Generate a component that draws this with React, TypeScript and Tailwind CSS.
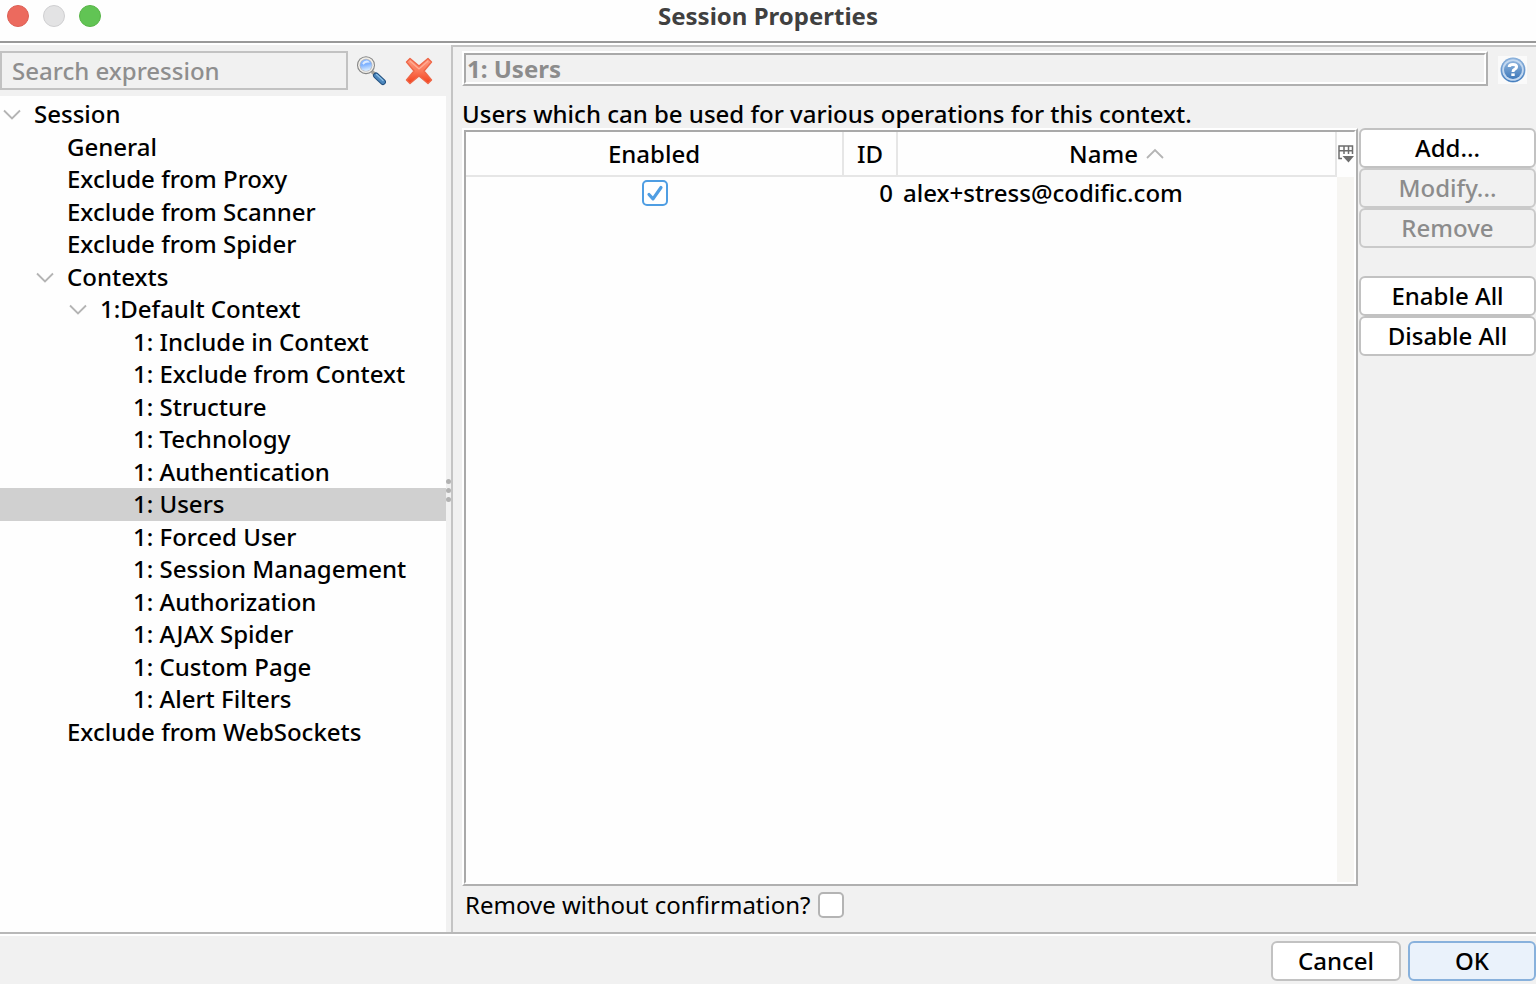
import { useState } from "react";
import type { ReactNode } from "react";

type Node = { label: string; indent: string; open?: boolean };

const nodes: Node[] = [
  { label: "Session", indent: "pl-[3px]", open: true },
  { label: "General", indent: "pl-[67px]" },
  { label: "Exclude from Proxy", indent: "pl-[67px]" },
  { label: "Exclude from Scanner", indent: "pl-[67px]" },
  { label: "Exclude from Spider", indent: "pl-[67px]" },
  { label: "Contexts", indent: "pl-9", open: true },
  { label: "1:Default Context", indent: "pl-[69px]", open: true },
  { label: "1: Include in Context", indent: "pl-[133px]" },
  { label: "1: Exclude from Context", indent: "pl-[133px]" },
  { label: "1: Structure", indent: "pl-[133px]" },
  { label: "1: Technology", indent: "pl-[133px]" },
  { label: "1: Authentication", indent: "pl-[133px]" },
  { label: "1: Users", indent: "pl-[133px]" },
  { label: "1: Forced User", indent: "pl-[133px]" },
  { label: "1: Session Management", indent: "pl-[133px]" },
  { label: "1: Authorization", indent: "pl-[133px]" },
  { label: "1: AJAX Spider", indent: "pl-[133px]" },
  { label: "1: Custom Page", indent: "pl-[133px]" },
  { label: "1: Alert Filters", indent: "pl-[133px]" },
  { label: "Exclude from WebSockets", indent: "pl-[67px]" },
];

function Chevron({ up = false }: { up?: boolean }) {
  return (
    <svg viewBox="0 0 18 12" className="h-3 w-[18px] shrink-0" fill="none" stroke="#b4b4b4" strokeWidth="1.8" aria-hidden="true">
      <path d={up ? "M1 10 L9 2 L17 10" : "M1 2.500 L9 10.500 L17 2.500"} />
    </svg>
  );
}

function SearchIcon() {
  return (
    <svg viewBox="0 0 30 30" className="size-[30px]" aria-hidden="true">
      <defs>
        <linearGradient id="lens" x1="0" y1="0" x2="0.2" y2="1">
          <stop offset="0" stopColor="#8fbcff" />
          <stop offset="0.5" stopColor="#7fb2ff" />
          <stop offset="1" stopColor="#d4e9ff" />
        </linearGradient>
      </defs>
      <path d="M16 15.500 L19.500 19" stroke="#a9a59c" strokeWidth="3.500" />
      <path d="M20 19.500 L27 26" stroke="#23507f" strokeWidth="6" strokeLinecap="round" />
      <path d="M20 19.500 L27 26" stroke="#4b86bd" strokeWidth="4" strokeLinecap="round" />
      <path d="M20.500 18.500 L27 24.500" stroke="#8fc0e6" strokeWidth="1.300" strokeLinecap="round" />
      <circle cx="10" cy="9.200" r="9" fill="#868686" />
      <circle cx="10" cy="9.200" r="7.900" fill="#f1efe9" />
      <circle cx="10" cy="9.200" r="6.400" fill="#b6b9c2" />
      <circle cx="10" cy="9.200" r="5.700" fill="url(#lens)" />
      <path d="M6.200 7.200 Q8 4.300 11 4.500 Q13 4.700 13.800 6.700 Q10 5.700 7.500 8.700 Z" fill="#dcebff" />
    </svg>
  );
}

function ClearIcon() {
  return (
    <svg viewBox="0 0 28 28" className="size-7" aria-hidden="true">
      <defs>
        <linearGradient id="cross" x1="0" y1="0" x2="0" y2="1">
          <stop offset="0" stopColor="#ff9a80" />
          <stop offset="0.5" stopColor="#fb7757" />
          <stop offset="1" stopColor="#f4401c" />
        </linearGradient>
      </defs>
      <path
        d="M5 1.500 L14 9 L23 1.500 L26.500 5 L19 14 L26.500 23 L23 26.500 L14 19 L5 26.500 L1.500 23 L9 14 L1.500 5 Z"
        fill="url(#cross)"
        stroke="#ee6647"
        strokeWidth="1.400"
        strokeLinejoin="round"
      />
      <path d="M5 4 L14 12 L23 4" fill="none" stroke="#ffad95" strokeWidth="1.200" />
    </svg>
  );
}

function HelpIcon() {
  return (
    <svg viewBox="0 0 26 26" className="size-[26px]" aria-hidden="true">
      <defs>
        <linearGradient id="help" x1="0" y1="0" x2="0" y2="1">
          <stop offset="0" stopColor="#8fb4dd" />
          <stop offset="1" stopColor="#3f79ba" />
        </linearGradient>
      </defs>
      <circle cx="13" cy="13" r="12.500" fill="#7fa9d8" />
      <circle cx="13" cy="13" r="12" fill="url(#help)" />
      <circle cx="13" cy="13" r="10.800" fill="#c3d8f0" />
      <circle cx="13" cy="13" r="9" fill="url(#help)" />
      <path d="M9.200 10 Q9.200 7.400 13 7.400 Q16.600 7.400 16.600 9.800 Q16.600 11.400 14.500 12.400 Q13 13 13 15" fill="none" stroke="#fff" strokeWidth="3" />
      <rect x="11.300" y="16.400" width="3.400" height="2.600" fill="#fff" />
    </svg>
  );
}

function ColumnsIcon() {
  return (
    <svg viewBox="0 0 17 20" className="h-5 w-[17px]" fill="none" stroke="#6e6e6e" aria-hidden="true">
      <path d="M5 14.500 H2 V2 H15.500 V10 M2 6.800 H15.500 M7 2 V10 M11.500 2 V10" strokeWidth="1.500" />
      <path d="M5.500 12 H17 L11.500 18.500 Z" fill="#6e6e6e" stroke="none" />
    </svg>
  );
}

function Etched({ className, children }: { className: string; children: ReactNode }) {
  return (
    <div className={`flex border-2 border-t-white border-r-[#b0b0b0] border-b-[#b0b0b0] border-l-white ${className}`}>
      <div className="flex min-w-0 flex-1 border-2 border-t-[#a9a9a9] border-r-white border-b-white border-l-[#a9a9a9]">{children}</div>
    </div>
  );
}

function CheckBox({ id, label, checked, onChange }: { id: string; label?: string; checked: boolean; onChange: () => void }) {
  return (
    <span className="inline-grid size-[26px] place-items-center">
      <input
        id={id}
        type="checkbox"
        aria-label={label}
        checked={checked}
        onChange={onChange}
        className="col-start-1 row-start-1 size-[26px] appearance-none rounded-[5px] border-2 border-[#b4b4b4] bg-white checked:border-[#4f9ee3]"
      />
      {checked && (
        <svg viewBox="0 0 26 26" className="pointer-events-none col-start-1 row-start-1 size-[26px]" fill="none" aria-hidden="true">
          <path d="M7 14.500 L11 18.800 L19 7.500" stroke="#4f9ee3" strokeWidth="3.200" strokeLinecap="round" strokeLinejoin="round" />
        </svg>
      )}
    </span>
  );
}

function SideButton({ children, disabled = false }: { children: ReactNode; disabled?: boolean }) {
  return (
    <button
      type="button"
      disabled={disabled}
      className="h-10 w-full rounded-md border-2 border-[#c2c2c2] bg-white text-center leading-8 disabled:border-[#cacaca] disabled:bg-[#f1f1f1] disabled:text-[#8c8c8c]"
    >
      {children}
    </button>
  );
}

export default function App() {
  const [selected, setSelected] = useState("1: Users");
  const [enabled, setEnabled] = useState(true);
  const [skipConfirm, setSkipConfirm] = useState(false);

  return (
    <div className="flex min-h-screen flex-col bg-[#f1f1f1] font-['Noto_Sans',sans-serif] text-2xl font-medium text-black">
      <header className="grid h-[43px] grid-cols-[1fr_auto_1fr] items-start border-b-2 border-[#999] bg-[#fefefe]">
        <div className="flex gap-3.5 pt-[5px] pl-[7px]">
          <button type="button" aria-label="Close" className="size-[22px] rounded-full border border-[#dd6056] bg-[#ec6a5e]" />
          <button type="button" aria-label="Minimize" className="size-[22px] rounded-full border border-[#cfcfd1] bg-[#e3e3e4]" />
          <button type="button" aria-label="Zoom" className="size-[22px] rounded-full border border-[#58b548] bg-[#61c454]" />
        </div>
        <h1 className="leading-8 font-bold text-[#404040]">Session Properties</h1>
      </header>

      <div className="flex flex-1 border-t-2 border-white">
        <aside className="flex w-[446px] shrink-0 flex-col">
          <div className="flex h-[51px] items-center">
            <input
              type="text"
              aria-label="Search expression"
              placeholder="Search expression"
              className="h-[39px] w-[348px] border-2 border-[#c2c2c2] bg-[#f1f1f1] px-2.5 outline-none placeholder:text-[#8e8e8e]"
            />
            <button type="button" aria-label="Search" className="ml-2">
              <SearchIcon />
            </button>
            <button type="button" aria-label="Clear search" className="ml-[19px]">
              <ClearIcon />
            </button>
          </div>
          <nav aria-label="Session tree" className="flex-1 bg-[#fefefe] pt-0.5">
            <ul className="grid h-[650px] auto-rows-fr">
              {nodes.map((n) => (
                <li key={n.label} className={selected === n.label ? "bg-[#d0d0d0]" : ""}>
                  <button
                    type="button"
                    onClick={() => setSelected(n.label)}
                    className={`flex h-full w-full items-center gap-[13px] text-left leading-8 whitespace-nowrap ${n.indent}`}
                  >
                    {n.open && <Chevron />}
                    {n.label}
                  </button>
                </li>
              ))}
            </ul>
          </nav>
        </aside>

        <div className="flex w-[5px] shrink-0 flex-col items-center justify-center gap-1 pt-1" role="separator" aria-orientation="vertical">
          <span className="size-[5px] rounded-full bg-[#b2b2b2]" />
          <span className="size-[5px] rounded-full bg-[#b2b2b2]" />
          <span className="size-[5px] rounded-full bg-[#b2b2b2]" />
        </div>

        <main className="flex min-w-0 flex-1 flex-col border-t-2 border-l-2 border-[#c4c4c4]">
          <div className="flex items-start gap-2.5 pt-1 pr-[9px] pl-[9px]">
            <Etched className="min-w-0 flex-1">
              <input
                type="text"
                readOnly
                aria-label="Panel"
                value="1: Users"
                className="h-[27px] w-full bg-[#f1f1f1] pl-px font-bold text-[#8c8c8c] outline-none"
              />
            </Etched>
            <button type="button" aria-label="Help" className="mt-[5px] flex h-7 w-[29px] items-center justify-center bg-[#fafafa]">
              <HelpIcon />
            </button>
          </div>

          <p className="mt-3.5 pl-[9px] leading-7">Users which can be used for various operations for this context.</p>

          <div className="flex flex-1 items-stretch gap-px pl-[9px]">
            <Etched className="min-w-0 flex-1 bg-[#fefefe]">
              <div className="min-w-0 flex-1">
                <table className="w-full table-fixed border-collapse">
                  <colgroup>
                    <col className="w-[377px]" />
                    <col className="w-[54px]" />
                    <col />
                  </colgroup>
                  <thead>
                    <tr className="h-11 border-b-2 border-[#e6e6e6]">
                      <th className="border-r-2 border-[#e6e6e6] p-0 font-medium">Enabled</th>
                      <th className="border-r-2 border-[#e6e6e6] p-0 font-medium">ID</th>
                      <th className="border-r-2 border-[#e6e6e6] p-0 font-medium">
                        <span className="flex items-center justify-center gap-2">
                          Name
                          <Chevron up />
                        </span>
                      </th>
                    </tr>
                  </thead>
                  <tbody>
                    <tr className="h-8 leading-8">
                      <td className="p-0">
                        <span className="flex h-8 items-center justify-center">
                          <CheckBox id="user-0" label="Enabled" checked={enabled} onChange={() => setEnabled(!enabled)} />
                        </span>
                      </td>
                      <td className="p-0 pr-1 text-right">0</td>
                      <td className="p-0 pl-1.5">alex+stress@codific.com</td>
                    </tr>
                  </tbody>
                </table>
              </div>
              <div className="flex w-[17px] flex-col">
                <button type="button" aria-label="Choose columns" className="flex h-[45px] items-center justify-center pb-0.5">
                  <ColumnsIcon />
                </button>
                <div className="flex-1 bg-[#f6f5f2]" />
              </div>
            </Etched>
            <div className="flex w-[177px] shrink-0 flex-col">
              <SideButton>Add...</SideButton>
              <SideButton disabled>Modify...</SideButton>
              <SideButton disabled>Remove</SideButton>
              <div className="mt-7 flex flex-col">
                <SideButton>Enable All</SideButton>
                <SideButton>Disable All</SideButton>
              </div>
            </div>
          </div>

          <div className="flex h-[46px] items-start gap-2 pt-[3px] pl-3">
            <label htmlFor="skip-confirm" className="leading-8 font-normal">
              Remove without confirmation?
            </label>
            <span className="flex h-8 items-center">
              <CheckBox id="skip-confirm" checked={skipConfirm} onChange={() => setSkipConfirm(!skipConfirm)} />
            </span>
          </div>
        </main>
      </div>

      <footer className="border-t-2 border-[#b8b8b8]">
        <div className="flex h-[50px] items-start justify-end gap-[7px] border-t-2 border-white pt-[5px]">
          <button type="button" className="h-10 w-[130px] rounded-md border-2 border-[#c2c2c2] bg-white leading-8">
            Cancel
          </button>
          <button type="button" className="h-10 w-32 rounded-md border-2 border-[#88b1dc] bg-[#eaf2fb] leading-8">
            OK
          </button>
        </div>
      </footer>
    </div>
  );
}
